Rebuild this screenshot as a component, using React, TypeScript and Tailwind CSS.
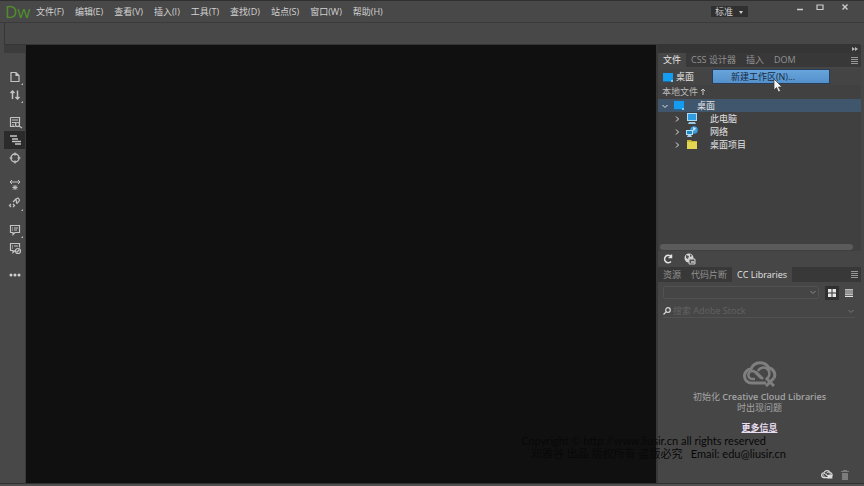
import React from 'react';

const menus = ['文件(F)', '编辑(E)', '查看(V)', '插入(I)', '工具(T)', '查找(D)', '站点(S)', '窗口(W)', '帮助(H)'];

function Corner() {
  return <path d="M17 15v2h-2z" fill="#c0c0c0" stroke="none" />;
}

function Tool({ label, active, className = '', children }: { label: string; active?: boolean; className?: string; children: React.ReactNode }) {
  return (
    <button aria-label={label} className={`flex h-[18px] w-full shrink-0 items-center justify-center ${active ? 'bg-[#2b2b2b]' : ''} ${className}`}>
      <svg viewBox="0 0 18 18" className="size-[18px] shrink-0" fill="none" stroke="#c4c4c4" strokeWidth="1.2">
        {children}
      </svg>
    </button>
  );
}

function ToolRail() {
  return (
    <aside className="flex w-[22px] shrink-0 flex-col border-r border-[#3a3a3a] bg-[#484848]">
      <div className="mb-[15px] h-2 bg-[#3c3c3c]" />
      <Tool label="打开文档">
        <path d="M5 4.500h5l3 3v6H5zM10 4.500v3h3" />
        <Corner />
      </Tool>
      <Tool label="文件管理" className="mb-[9px]">
        <path d="M6.500 13V5M4.500 7l2-2 2 2M11.500 4.500v8M9.500 11l2 2 2-2" strokeWidth="1.500" />
        <Corner />
      </Tool>
      <Tool label="实时视图">
        <path d="M4.500 4.500h9v6M4.500 4.500v9h5M6 7h6M6 9.500h4M6 12h2" />
        <circle cx="11.500" cy="11.500" r="2" />
        <path d="M13 13l3 2" />
      </Tool>
      <Tool label="显示代码导航" active>
        <path d="M4 5h7M6 8h6M6 10.500h9M9 13h6" strokeWidth="1.500" />
      </Tool>
      <Tool label="检查" className="mb-[9px]">
        <circle cx="9" cy="9" r="4" strokeWidth="1.400" />
        <path d="M9 3.500v3M9 11.500v3M3.500 9h3M11.500 9h3" />
      </Tool>
      <Tool label="展开全部">
        <path d="M4 6h10M6 4L4 6l2 2M12 4l2 2-2 2M7 9.500l4 4M11 9.500l-4 4M9 9v5M6.500 11.500h5" strokeWidth="1" />
      </Tool>
      <Tool label="格式化源代码" className="mb-[9px]">
        <path d="M5 10l-1.500 1.500L5 13M7 10l1.500 1.500L7 13M7 8l3-3M10 5l2-1 1.500 2-1 2-2 .5zM11 9v1" />
        <Corner />
      </Tool>
      <Tool label="应用注释">
        <path d="M4.500 4.500h9v7H9l-2 2v-2H4.500zM6 7h1M8 7h4M6 9h1M8 9h3" />
        <Corner />
      </Tool>
      <Tool label="删除注释" className="mb-[9px]">
        <path d="M9 11.500l-2 2v-2H4.500v-7h9v4M6 7h1M8 7h4M6 9h1" />
        <circle cx="12" cy="12" r="2.500" />
        <path d="M10.500 13.500l3-3" />
      </Tool>
      <Tool label="自定义工具栏">
        <g fill="#d0d0d0" stroke="none">
          <circle cx="5" cy="9" r="1.500" />
          <circle cx="9" cy="9" r="1.500" />
          <circle cx="13" cy="9" r="1.500" />
        </g>
      </Tool>
    </aside>
  );
}

function Monitor({ small }: { small?: boolean }) {
  return (
    <svg viewBox="0 0 12 11" className="h-[11px] w-3 shrink-0">
      {small ? (
        <path d="M1 1h10v8H1z" fill="#149df0" />
      ) : (
        <>
          <path d="M1 0h10v8H1z" fill="#a8dcf5" />
          <path d="M2 1h8v6H2z" fill="#2f9be0" />
          <path d="M3 9h6l1 2H2z" fill="#9cc7dd" />
        </>
      )}
    </svg>
  );
}

function DesktopIcon() {
  return (
    <svg viewBox="0 0 12 11" className="h-[11px] w-3 shrink-0">
      <path d="M1 1h10v8H1z" fill="#149df0" />
      <path d="M1 9h10v1H1z" fill="#1b6ea5" />
      <path d="M9 8h2v2H9z" fill="#7ccbf5" />
    </svg>
  );
}

function NetworkIcon() {
  return (
    <svg viewBox="0 0 12 11" className="h-[11px] w-3 shrink-0">
      <circle cx="8" cy="4" r="3.800" fill="#3d9bdc" />
      <path d="M7 1l3 1-1 2-2 1z" fill="#b8e2f2" />
      <path d="M0 4h7v5H0z" fill="#b5dff2" />
      <path d="M1 5h5v3H1z" fill="#2387c7" />
      <path d="M2 9h3l1 2H1z" fill="#a7cfdf" />
    </svg>
  );
}

function FolderIcon() {
  return (
    <svg viewBox="0 0 12 11" className="h-[11px] w-3 shrink-0">
      <path d="M1 1h4l1 1h5v8H1z" fill="#c9b935" />
      <path d="M1 3h10v7H1z" fill="#e3d552" />
    </svg>
  );
}

function Chevron({ down, className = '' }: { down?: boolean; className?: string }) {
  return (
    <svg viewBox="0 0 8 8" className={`size-2 shrink-0 ${className}`} fill="none" stroke="currentColor" strokeWidth="1">
      <path d={down ? 'M1.500 3L4 5.500 6.500 3' : 'M3 1.500L5.500 4 3 6.500'} />
    </svg>
  );
}

function MenuLines() {
  return (
    <button aria-label="面板菜单" className="ml-auto mr-[3px] flex h-full items-center">
      <svg viewBox="0 0 7 7" className="size-[7px]" stroke="#969696" strokeWidth="1">
        <path d="M0 .5h7M0 2.500h7M0 4.500h7M0 6.500h7" />
      </svg>
    </button>
  );
}

function Tab({ active, children }: { active?: boolean; children: React.ReactNode }) {
  return (
    <button role="tab" aria-selected={!!active} className={`h-full shrink-0 px-[5px] ${active ? 'bg-[#464646] text-[#e4e4e4]' : 'text-[#929292]'}`}>
      {children}
    </button>
  );
}

function CloudIcon({ className, badge }: { className: string; badge?: 'x' | 'search' }) {
  return (
    <svg viewBox="0 0 34 26" className={className} fill="none" stroke="currentColor" strokeWidth="3">
      <path d="M23 22H9a7 7 0 0 1-1-14 10 10 0 0 1 18-1 7 7 0 0 1 5 10" />
      <path d="M18 17l-6-6a4 4 0 1 0-3 7h3M13 11l7 7M15 10a6 6 0 1 1 8 8" strokeWidth="2.500" />
      {badge === 'x' && <path d="M23 17l8 8M31 17l-8 8" />}
      {badge === 'search' && <path d="M20 15h11v8H20z" fill="currentColor" />}
    </svg>
  );
}

function FilesPanel() {
  const rows = [
    { name: '此电脑', icon: <Monitor /> },
    { name: '网络', icon: <NetworkIcon /> },
    { name: '桌面项目', icon: <FolderIcon /> },
  ];
  return (
    <section className="flex h-[222px] shrink-0 flex-col">
      <div className="flex h-2 justify-end bg-[#353535] pr-[3px]">
        <svg viewBox="0 0 6 8" className="h-2 w-[6px]" fill="#b8b8b8">
          <path d="M0 2l3 2-3 2zM3 2l3 2-3 2z" />
        </svg>
      </div>
      <div role="tablist" className="flex h-[14px] items-center bg-[#383838] text-[9px] leading-[14px]">
        <Tab active>文件</Tab>
        <Tab>CSS 设计器</Tab>
        <Tab>插入</Tab>
        <Tab>DOM</Tab>
        <MenuLines />
      </div>
      <div className="relative mt-[2px] flex h-4 items-center bg-[#444444] pl-1 text-[9px] text-[#e0e0e0]">
        <DesktopIcon />
        <span className="pl-[2px]">桌面</span>
        <div role="menu" className="absolute left-[54px] top-0 h-[15px] w-[118px] border border-[#273c58] bg-linear-to-b from-[#68a5dc] to-[#5590ca]">
          <button role="menuitem" className="h-full w-full pr-4 text-center text-[9px] leading-[13px] text-[#172c44]">新建工作区(N)...</button>
          <svg viewBox="0 0 10 15" className="absolute left-[60px] top-2 h-[15px] w-[10px]">
            <path d="M1 1v11l2.500-2.500L5.500 14l2-1-2-4H9z" fill="#f5f5f5" stroke="#333" strokeWidth=".7" />
          </svg>
        </div>
      </div>
      <div className="flex h-[14px] items-center gap-[2px] bg-[#414141] pl-1 text-[9px] text-[#bcbcbc]">
        本地文件
        <svg viewBox="0 0 6 8" className="h-2 w-[6px]" fill="none" stroke="#c8c8c8" strokeWidth="1">
          <path d="M3 7V1M1 3l2-2 2 2" />
        </svg>
      </div>
      <div role="tree" className="min-h-0 flex-1 bg-[#404040] text-[9px] text-[#e2e2e2]">
        <div role="treeitem" aria-selected="true" className="flex h-[13px] items-center bg-[#40566d] pl-[3px]">
          <Chevron down />
          <span className="flex pl-1"><DesktopIcon /></span>
          <span className="pl-3">桌面</span>
        </div>
        {rows.map((row) => (
          <div role="treeitem" aria-selected="false" key={row.name} className="flex h-[13px] items-center pl-[15px]">
            <Chevron />
            <span className="flex pl-[5px]">{row.icon}</span>
            <span className="pl-3">{row.name}</span>
          </div>
        ))}
      </div>
      <div className="h-[7px] bg-[#404040] pl-[2px] pr-2">
        <div className="h-[6px] rounded-sm bg-[#5b5b5b]" />
      </div>
      <div className="flex h-4 items-center gap-[10px] pl-1">
        <button aria-label="刷新">
          <svg viewBox="0 0 12 12" className="size-3" fill="none" stroke="#e4e4e4" strokeWidth="1.500">
            <path d="M9 8.500A3.700 3.700 0 1 1 9 3.500M9.500 1.500v3h-3" />
          </svg>
        </button>
        <button aria-label="连接到远程服务器">
          <svg viewBox="0 0 12 12" className="size-3">
            <circle cx="5" cy="5" r="4.500" fill="#d4d4d4" />
            <path d="M2 2l3 1-1 3-2-1zM6 1l2 2-2 1z" fill="#555" />
            <path d="M5 6h6v5H5z" fill="#505050" stroke="#ccc" />
            <path d="M7 8h4v2H7z" fill="#aaa" />
          </svg>
        </button>
      </div>
    </section>
  );
}

function LibrariesPanel() {
  return (
    <section className="flex min-h-0 flex-1 flex-col">
      <div role="tablist" className="flex h-[15px] items-center bg-[#383838] text-[9px] leading-[15px]">
        <Tab>资源</Tab>
        <Tab>代码片断</Tab>
        <Tab active>CC Libraries</Tab>
        <MenuLines />
      </div>
      <div className="mt-1 flex h-[13px] items-center pl-[5px] pr-2">
        <div className="relative h-[13px] flex-1">
          <select aria-label="库" className="block h-full w-full appearance-none rounded-xs border border-[#525252] bg-[#454545]" />
          <Chevron down className="pointer-events-none absolute right-[2px] top-[2px] text-[#888888]" />
        </div>
        <button aria-label="网格视图" className="ml-1.5 flex h-[14px] w-[14px] items-center justify-center bg-[#302e30]">
          <svg viewBox="0 0 8 8" className="size-2" fill="#e6e6e6"><path d="M0 0h3.500v3.500H0zM4.500 0H8v3.500H4.500zM0 4.500h3.500V8H0zM4.500 4.500H8V8H4.500z" /></svg>
        </button>
        <button aria-label="列表视图" className="ml-[6px]">
          <svg viewBox="0 0 8 8" className="size-2" stroke="#e2e2e2" strokeWidth="1.200"><path d="M0 .8h8M0 3h8M0 5.200h8M0 7.400h8" /></svg>
        </button>
      </div>
      <label className="ml-[5px] mr-[6px] mt-[5px] flex h-[14px] shrink-0 items-center border-b border-[#515151]">
        <svg viewBox="0 0 8 8" className="size-2 shrink-0" fill="none" stroke="#d8d8d8" strokeWidth="1.200">
          <circle cx="5" cy="3" r="2.300" /><path d="M3.300 4.700L.5 7.500" />
        </svg>
        <input aria-label="搜索" placeholder="搜索 Adobe Stock" className="ml-[2px] min-w-0 flex-1 bg-transparent text-[9px] outline-none placeholder:text-[#626262]" />
        <Chevron down className="text-[#777777]" />
      </label>
      <div className="flex min-h-0 flex-1 flex-col items-center justify-center pt-[10px] text-center text-[9px] leading-[11px] text-[#a4a4a4]">
        <CloudIcon badge="x" className="h-[26px] w-[34px] text-[#7f7f7f]" />
        <p className="mt-1 w-[136px]">初始化 <span className="font-semibold">Creative Cloud Libraries</span> 时出现问题</p>
        <a href="#more" className="mt-[9px] font-bold text-[#e8dcf0] underline">更多信息</a>
      </div>
      <div className="flex h-[17px] shrink-0 items-center justify-end gap-2 pr-3">
        <button aria-label="同步"><CloudIcon badge="search" className="h-[9px] w-3 text-[#e0e0e0]" /></button>
        <button aria-label="删除">
          <svg viewBox="0 0 8 10" className="h-[10px] w-2" fill="#7c7c7c"><path d="M0 1h2V0h4v1h2v1H0zM1 3h6v7H1z" /></svg>
        </button>
      </div>
    </section>
  );
}

export default function App() {
  return (
    <div className="relative flex h-screen flex-col overflow-hidden border-t border-[#303030] bg-[#484848] font-['Open_Sans','Noto_Sans_CJK_SC',sans-serif] text-[9px] text-[#d2d2d2]">
      <header className="flex h-[22px] shrink-0 items-center border-b border-[#3a3a3a]">
        <div className="w-[30px] pl-[5px] text-[17px] leading-[22px] text-[#4f8f2c]">Dw</div>
        <nav className="flex gap-[11px] pl-[6px]">
          {menus.map((m) => <button key={m} className="shrink-0">{m}</button>)}
        </nav>
        <div className="relative ml-auto h-[11px] w-[37px]">
          <select aria-label="工作区" className="block h-full w-full appearance-none bg-[#303030] pl-1 text-[9px] leading-[11px]">
            <option>标准</option>
          </select>
          <svg viewBox="0 0 4 3" className="pointer-events-none absolute right-[5px] top-[5px] h-[3px] w-1" fill="#d0d0d0"><path d="M0 0h4L2 3z" /></svg>
        </div>
        <div className="ml-12 flex items-start gap-3 self-start pr-[15px] pt-[2px]">
          <button aria-label="最小化"><svg viewBox="0 0 8 8" className="size-2" stroke="#ccc" strokeWidth="1.500"><path d="M1 6.500h6" /></svg></button>
          <button aria-label="最大化"><svg viewBox="0 0 8 8" className="size-2" fill="none" stroke="#ccc" strokeWidth="1.200"><path d="M1 2h6v4.500H1z" /></svg></button>
          <button aria-label="关闭" className="ml-[5px]"><svg viewBox="0 0 8 8" className="size-2" stroke="#ccc" strokeWidth="1.400"><path d="M1.500 1.500l5 5M6.500 1.500l-5 5" /></svg></button>
        </div>
      </header>
      <div className="mx-1 h-[22px] shrink-0 border-b border-l border-[#353535] bg-[#484848]" />
      <div className="flex min-h-0 flex-1 pl-1">
        <ToolRail />
        <main className="min-w-0 flex-1 bg-[#101010]" />
        <div className="flex w-[208px] shrink-0 flex-col border-l-2 border-[#383838] bg-[#464646] pr-[3px]">
          <FilesPanel />
          <LibrariesPanel />
        </div>
      </div>
      <footer className="h-[3px] shrink-0 border-t border-[#303030] bg-[#505050]" />
      <div className="pointer-events-none absolute bottom-[26px] right-[78px] font-['Lato','Noto_Sans_CJK_SC',sans-serif] text-[11px] leading-[13px] text-[#080808]">
        <p className="pr-5 text-right">Copyright © http://www.liusir.cn all rights reserved</p>
        <p className="text-right">邓雅谷 出品 版权所有 盗版必究 &nbsp; Email: edu@liusir.cn</p>
      </div>
    </div>
  );
}
